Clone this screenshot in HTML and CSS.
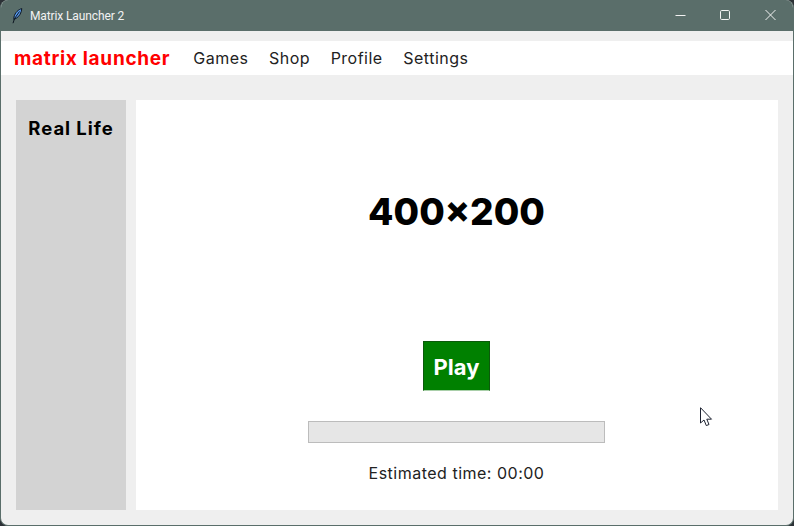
FILE: index.html
```html
<!DOCTYPE html>
<html lang="en">
<head>
<meta charset="utf-8">
<title>Matrix Launcher 2</title>
<link rel="stylesheet" href="styles.css">
</head>
<body>
<div class="window">
  <header class="titlebar">
    <svg class="app-icon" width="12" height="16" viewBox="0 0 12 16"><path d="M10.8 .6C7.6 1.4 4 4.4 3 9L2.8 11.4 5 10.4C8.2 8.6 10.4 5 10.8 .6Z" fill="#5a9cf0" stroke="#0b1420" stroke-width="1"/><path d="M8.5 3.5 3.6 10.5 2 15.2" fill="none" stroke="#0b1420" stroke-width="1"/></svg>
    <span class="window-title">Matrix Launcher 2</span>
    <div class="window-controls">
      <svg class="control" width="45" height="31" viewBox="0 0 45 31"><path d="M17.5 15.5H27.5" stroke="#f2f2f2" fill="none"/></svg>
      <svg class="control" width="45" height="31" viewBox="0 0 45 31"><rect x="17.5" y="10.5" width="9" height="9" rx="1.2" stroke="#f2f2f2" fill="none"/></svg>
      <svg class="control" width="45" height="31" viewBox="0 0 45 31"><path d="M17.5 10 27.5 20M27.5 10 17.5 20" stroke="#f2f2f2" fill="none"/></svg>
    </div>
  </header>
  <nav class="navbar">
    <span class="brand">matrix launcher</span>
    <a class="nav-link">Games</a>
    <a class="nav-link">Shop</a>
    <a class="nav-link">Profile</a>
    <a class="nav-link">Settings</a>
  </nav>
  <div class="content">
    <aside class="sidebar"><div class="game-name">Real Life</div></aside>
    <main class="main">
      <div class="banner">400×200</div>
      <button class="play">Play</button>
      <div class="progress"></div>
      <div class="estimate">Estimated time: 00:00</div>
      <svg class="cursor" width="13" height="20" viewBox="0 0 13 20"><path d="M.5 .7V16L4 13 6.3 18.6 9 17.5 6.8 12.2H11.5Z" fill="#fff" stroke="#1d2230" stroke-width="1"/></svg>
    </main>
  </div>
</div>
</body>
</html>
```
FILE: styles.css
```css
* { box-sizing: border-box; }
html, body { margin: 0; height: 100%; background: #2c3136; overflow: hidden; }
.window {
  width: 794px; height: 526px; display: flex; flex-direction: column;
  background: #efefef; border: 1px solid #5a6e6a; border-top: 0;
  border-radius: 8px; overflow: hidden;
  font-family: "Inter", "Liberation Sans", sans-serif;
}
.titlebar {
  height: 31px; flex: none; display: flex; align-items: center;
  background: #5a6e6a; color: #f2f2f2; padding-left: 10px;
  font: 12px Roboto, "Open Sans", sans-serif;
}
.app-icon { flex: none; }
.window-title { margin-left: 7px; letter-spacing: -.12px; }
.window-controls { margin-left: auto; display: flex; }
.control { display: block; }
.navbar {
  height: 34px; flex: none; margin-top: 10px; background: #fff;
  display: flex; align-items: center; padding-left: 13px; gap: 20.5px;
  font-size: 16px; color: #222;
}
.brand { color: #f00; font-weight: 700; font-size: 19px; margin-right: 2.5px; letter-spacing: .7px; }
.nav-link { letter-spacing: .5px; }
.content { flex: 1; display: flex; gap: 10px; padding: 25px 15px 15px; min-height: 0; }
.sidebar { width: 110px; background: #d3d3d3; padding-top: 16px; text-align: center; }
.game-name { font-size: 18.5px; font-weight: 700; color: #000; line-height: 24px; letter-spacing: .95px; }
.main {
  flex: 1; background: #fff; position: relative; padding-right: 1px;
  display: flex; flex-direction: column; align-items: center;
}
.banner { margin-top: 87px; height: 50px; font-size: 37px; font-weight: 800; line-height: 50px; color: #000; }
.play {
  margin-top: 104px; width: 67px; height: 50px; padding: 2px 0 0;
  background: #008000; color: #fff; font: 700 22px "Inter", sans-serif;
  border: 1px solid #0b5a0b; border-bottom-color: #a9cfa9;
}
.progress { margin-top: 30px; width: 297px; height: 22px; background: #e6e6e6; border: 1px solid #bcbcbc; }
.estimate { margin-top: 20px; font-size: 16px; color: #222; line-height: 20px; letter-spacing: .5px; }
.cursor { position: absolute; left: 564px; top: 307px; }
```
